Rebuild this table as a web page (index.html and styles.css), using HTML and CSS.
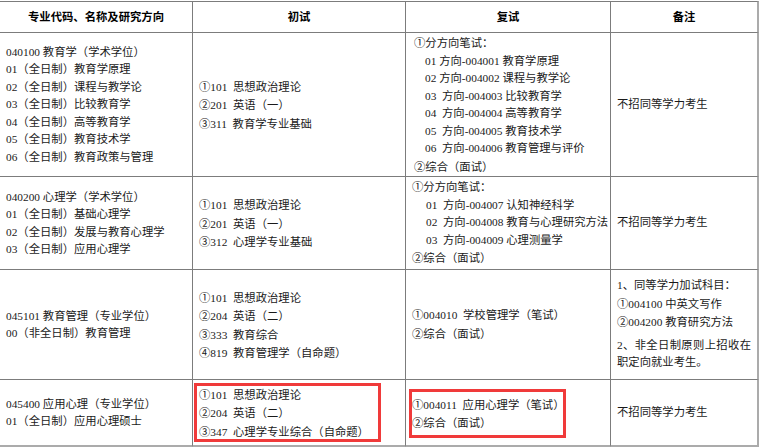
FILE: index.html
```html
<!DOCTYPE html>
<html lang="zh-CN">
<head>
<meta charset="utf-8">
<title>招生专业目录</title>
<link rel="stylesheet" href="styles.css">
</head>
<body>
<div class="plan">
  <div class="cell head">专业代码、名称及研究方向</div>
  <div class="cell head">初试</div>
  <div class="cell head">复试</div>
  <div class="cell head last">备注</div>

  <div class="cell c1">
    <div>040100 教育学（学术学位）</div>
    <div>01（全日制）教育学原理</div>
    <div>02（全日制）课程与教学论</div>
    <div>03（全日制）比较教育学</div>
    <div>04（全日制）高等教育学</div>
    <div>05（全日制）教育技术学</div>
    <div>06（全日制）教育政策与管理</div>
  </div>
  <div class="cell c2">
    <div><span class="n">①</span>101&nbsp; 思想政治理论</div>
    <div><span class="n">②</span>201&nbsp; 英语（一）</div>
    <div><span class="n">③</span>311&nbsp; 教育学专业基础</div>
  </div>
  <div class="cell c3 wide">
    <div><span class="n">①</span>分方向笔试：</div>
    <div class="sub">01 方向-004001 教育学原理</div>
    <div class="sub">02 方向-004002 课程与教学论</div>
    <div class="sub">03&nbsp; 方向-004003 比较教育学</div>
    <div class="sub">04&nbsp; 方向-004004 高等教育学</div>
    <div class="sub">05&nbsp; 方向-004005 教育技术学</div>
    <div class="sub">06&nbsp; 方向-004006 教育管理与评价</div>
    <div><span class="n">②</span>综合（面试）</div>
  </div>
  <div class="cell c4 last">
    <div>不招同等学力考生</div>
  </div>

  <div class="cell c1">
    <div>040200 心理学（学术学位）</div>
    <div>01（全日制）基础心理学</div>
    <div>02（全日制）发展与教育心理学</div>
    <div>03（全日制）应用心理学</div>
  </div>
  <div class="cell c2">
    <div><span class="n">①</span>101&nbsp; 思想政治理论</div>
    <div><span class="n">②</span>201&nbsp; 英语（一）</div>
    <div><span class="n">③</span>312&nbsp; 心理学专业基础</div>
  </div>
  <div class="cell c3">
    <div><span class="n">①</span>分方向笔试：</div>
    <div class="sub2">01&nbsp; 方向-004007 认知神经科学</div>
    <div class="sub2">02&nbsp; 方向-004008 教育与心理研究方法</div>
    <div class="sub2">03&nbsp; 方向-004009 心理测量学</div>
    <div><span class="n">②</span>综合（面试）</div>
  </div>
  <div class="cell c4 last">
    <div>不招同等学力考生</div>
  </div>

  <div class="cell c1">
    <div>045101 教育管理（专业学位）</div>
    <div>00（非全日制）教育管理</div>
  </div>
  <div class="cell c2">
    <div><span class="n">①</span>101&nbsp; 思想政治理论</div>
    <div><span class="n">②</span>204&nbsp; 英语（二）</div>
    <div><span class="n">③</span>333&nbsp; 教育综合</div>
    <div><span class="n">④</span>819&nbsp; 教育管理学（自命题）</div>
  </div>
  <div class="cell c3">
    <div><span class="n">①</span>004010&nbsp; 学校管理学（笔试）</div>
    <div><span class="n">②</span>综合（面试）</div>
  </div>
  <div class="cell c4 last">
    <div class="para">
      <div>1、同等学力加试科目：</div>
      <div><span class="n">①</span>004100 中英文写作</div>
      <div><span class="n">②</span>004200 教育研究方法</div>
    </div>
    <div class="para justify">2、非全日制原则上招收在职定向就业考生。</div>
  </div>

  <div class="cell c1 bottom">
    <div>045400 应用心理（专业学位）</div>
    <div>01（全日制）应用心理硕士</div>
  </div>
  <div class="cell c2 bottom flat">
    <div class="mark mark-a">
      <div><span class="n">①</span>101&nbsp; 思想政治理论</div>
      <div><span class="n">②</span>204&nbsp; 英语（二）</div>
      <div><span class="n">③</span>347&nbsp; 心理学专业综合（自命题）</div>
    </div>
  </div>
  <div class="cell c3 bottom flat">
    <div class="mark mark-b">
      <div><span class="n">①</span>004011&nbsp; 应用心理学（笔试）</div>
      <div><span class="n">②</span>综合（面试）</div>
    </div>
  </div>
  <div class="cell c4 last bottom">
    <div>不招同等学力考生</div>
  </div>
</div>
</body>
</html>
```

FILE: styles.css
```css
html, body {
  margin: 0;
  padding: 0;
  background: #ffffff;
}

body {
  font-family: "Liberation Serif", "Noto Sans CJK SC", serif;
  font-size: 11.33px;
  line-height: 17.5px;
  color: #1a1a1a;
}

.plan {
  display: grid;
  grid-template-columns: 193px 213px 205px 148px;
  grid-template-rows: 32px 144px 93px 110px 67px;
  margin-top: 1px;
  width: 759px;
}

.cell {
  box-sizing: border-box;
  border-right: 1px solid #7c7c7c;
  border-bottom: 1px solid #7c7c7c;
  display: flex;
  flex-direction: column;
  justify-content: center;
  white-space: nowrap;
  min-width: 0;
}

.cell.last {
  border-right: 2px solid #ababab;
}

.cell.bottom {
  border-bottom: 2px solid #ababab;
}

.head {
  border-top: 1px solid #7c7c7c;
  font-family: "Noto Sans CJK SC", sans-serif;
  font-weight: 700;
  align-items: center;
  text-align: center;
  color: #000000;
}

.n {
  font-family: "Noto Sans CJK SC", sans-serif;
}

.c1 {
  padding-left: 6px;
  padding-top: 1px;
}

.c2 {
  padding-left: 6px;
  padding-top: 2px;
}

.c3 {
  padding-left: 6px;
}

.c3.wide {
  padding-left: 8px;
  padding-top: 1px;
}

.c4 {
  padding-left: 6px;
  padding-right: 6px;
  white-space: normal;
}

.sub {
  padding-left: 11px;
}

.sub2 {
  padding-left: 14px;
}

.para + .para {
  margin-top: 5px;
}

.justify {
  text-align: justify;
  text-align-last: left;
}

.flat {
  padding: 0;
  justify-content: flex-start;
}

.mark {
  box-sizing: border-box;
  border: 3px solid #f03a3a;
  display: flex;
  flex-direction: column;
  justify-content: center;
}

.mark-a {
  margin: 3px 0 0 1px;
  width: 187px;
  height: 59px;
  padding: 2px 0 0 2px;
}

.mark-b {
  margin: 9px 0 0 3px;
  width: 157px;
  height: 49px;
  padding: 1px 0 0 0;
}
```
